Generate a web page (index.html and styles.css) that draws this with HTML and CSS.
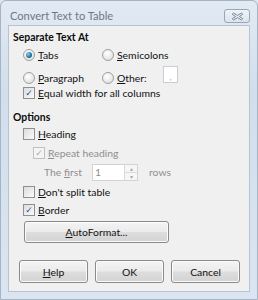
FILE: index.html
```html
<!DOCTYPE html>
<html lang="en">
<head>
    <meta charset="UTF-8">
    <title>Convert Text to Table</title>
    <link rel="stylesheet" href="styles.css">
</head>
<body>
    <div class="window">
        <div class="titlebar">
            <span class="title">Convert Text to Table</span>
            <span class="close-btn">
                <svg width="13" height="9" viewBox="0 0 13 9">
                    <path d="M2.5 1 L6.5 3.4 L10.5 1 L11.8 2.2 L8.4 4.5 L11.8 6.8 L10.5 8 L6.5 5.6 L2.5 8 L1.2 6.8 L4.6 4.5 L1.2 2.2 Z" fill="#e9eef4" stroke="#7d8896" stroke-width="1"/>
                </svg>
            </span>
        </div>
        <div class="client">
            <div class="row group-title r-sep">Separate Text At</div>
            <div class="row r-tabs">
                <label class="opt col1"><span class="radio checked"></span><span><u>T</u>abs</span></label>
                <label class="opt col2"><span class="radio"></span><span><u>S</u>emicolons</span></label>
            </div>
            <div class="row r-para">
                <label class="opt col1"><span class="radio"></span><span><u>P</u>aragraph</span></label>
                <label class="opt col2 other"><span class="radio"></span><span><u>O</u>ther:</span></label>
                <span class="other-input">,</span>
            </div>
            <div class="row r-equal">
                <label class="opt indent"><span class="check checked"></span><span><u>E</u>qual width for all columns</span></label>
            </div>

            <div class="row group-title r-options">Options</div>
            <div class="row r-heading">
                <label class="opt indent"><span class="check"></span><span><u>H</u>eading</span></label>
            </div>
            <div class="row r-repeat">
                <label class="opt indent2 disabled"><span class="check checked"></span><span><u>R</u>epeat heading</span></label>
            </div>
            <div class="row r-first disabled">
                <span class="first-label">The <u>f</u>irst</span>
                <span class="spin">
                    <span class="spin-value">1</span>
                    <span class="spin-arrows">
                        <span class="arrow">&#9652;</span>
                        <span class="arrow">&#9662;</span>
                    </span>
                </span>
                <span class="rows-label">rows</span>
            </div>
            <div class="row r-split">
                <label class="opt indent"><span class="check"></span><span><u>D</u>on't split table</span></label>
            </div>
            <div class="row r-border">
                <label class="opt indent"><span class="check checked"></span><span><u>B</u>order</span></label>
            </div>
            <button class="btn autoformat"><u>A</u>utoFormat...</button>

            <div class="footer">
                <button class="btn"><u>H</u>elp</button>
                <button class="btn">OK</button>
                <button class="btn">Cancel</button>
            </div>
        </div>
    </div>
</body>
</html>
```

FILE: styles.css
```css
body {
    margin: 0;
    padding: 0;
    font-family: Lato, "Noto Sans", sans-serif;
    font-size: 10.4px;
    color: #111;
    background: #dce6f2;
}
.window {
    width: 258px;
    height: 300px;
    box-sizing: border-box;
    border: 1px solid #a7b4c3;
    border-radius: 6px 6px 0 0;
    background: linear-gradient(#e2eaf4, #d2deec 30%, #dbe5f1);
    padding: 0 7px 7px 7px;
}
.titlebar {
    height: 24px;
    display: flex;
    align-items: center;
    justify-content: space-between;
}
.title {
    color: #6e7884;
    font-size: 11.1px;
    margin-left: 2px;
    margin-top: 4px;
}
.close-btn {
    width: 24px;
    height: 12px;
    border: 1px solid #9aa6b3;
    border-radius: 3px;
    background: linear-gradient(#eef3f8, #dbe4ee);
    display: flex;
    align-items: center;
    justify-content: center;
    margin-top: 6px;
}
.close-btn svg {
    display: block;
}
.client {
    height: 267px;
    box-sizing: border-box;
    background: #f0f0f0;
    border: 1px solid #b6c3d1;
    padding-top: 4px;
}
.row {
    height: 14px;
    display: flex;
    align-items: center;
    white-space: nowrap;
}
.group-title {
    font-weight: bold;
    padding-left: 4px;
    color: #0c0c0c;
}
.r-tabs { margin-top: 4px; }
.r-para { margin-top: 9px; }
.r-equal { margin-top: 1px; }
.r-options { margin-top: 10px; }
.r-heading { margin-top: 3px; }
.r-repeat { margin-top: 5px; }
.r-first { margin-top: 5px; }
.r-split { margin-top: 6px; }
.r-border { margin-top: 4px; }

.opt {
    display: flex;
    align-items: center;
    gap: 3px;
}
.col1 {
    width: 93px;
    padding-left: 14px;
    box-sizing: border-box;
}
.other {
    width: 61px;
}
.indent {
    padding-left: 14px;
}
.indent2 {
    padding-left: 24px;
}
.disabled {
    color: #8f8f8f;
}
u {
    text-decoration-thickness: 1px;
    text-underline-offset: 1px;
}

.radio {
    flex-shrink: 0;
    width: 12px;
    height: 12px;
    box-sizing: border-box;
    border: 1px solid #a0a0a0;
    border-radius: 50%;
    background: radial-gradient(circle at 40% 35%, #ffffff, #e4e4e4 70%, #d2d2d2);
    display: flex;
    align-items: center;
    justify-content: center;
}
.radio.checked::after {
    content: "";
    width: 6px;
    height: 6px;
    border-radius: 50%;
    background: radial-gradient(circle at 35% 35%, #8fd3ef, #1f6f9c 60%, #18506f);
}
.check {
    flex-shrink: 0;
    width: 12px;
    height: 12px;
    box-sizing: border-box;
    border: 1px solid #8e8f8f;
    background: linear-gradient(135deg, #dcdcdc, #fbfbfb);
    display: flex;
    align-items: center;
    justify-content: center;
    color: #3a4f8f;
    font-family: "DejaVu Sans", sans-serif;
    font-size: 9px;
    line-height: 1;
}
.check.checked::after {
    content: "\2713";
}
.disabled .check {
    border-color: #c0c0c0;
    background: #f4f4f4;
    color: #a8a8a8;
}

.other-input {
    width: 15px;
    height: 17px;
    box-sizing: border-box;
    border: 1px solid #c9ced6;
    background: #fff;
    color: #b0b0b0;
    font-size: 9px;
    display: flex;
    align-items: flex-end;
    justify-content: center;
    margin-bottom: 7px;
}

.first-label {
    padding-left: 35px;
    width: 83px;
    box-sizing: border-box;
}
.spin {
    width: 46px;
    height: 17px;
    box-sizing: border-box;
    border: 1px solid #d3d3d3;
    background: #fff;
    display: flex;
}
.spin-value {
    flex: 1;
    padding-left: 2px;
    line-height: 15px;
}
.spin-arrows {
    width: 12px;
    display: flex;
    flex-direction: column;
    border-left: 1px solid #dadada;
    background: #f6f6f6;
}
.arrow {
    flex: 1;
    font-size: 6px;
    line-height: 7px;
    text-align: center;
    color: #a8a8a8;
}
.arrow + .arrow {
    border-top: 1px solid #dadada;
}
.rows-label {
    margin-left: 11px;
}

.btn {
    font-family: inherit;
    font-size: 10.4px;
    color: #111;
    height: 22px;
    border: 1px solid #8a8a8a;
    border-radius: 3px;
    background: linear-gradient(#f4f4f4, #ebebeb 48%, #dddddd 52%, #d3d3d3);
    box-shadow: inset 0 0 0 1px #fcfcfc;
    padding: 0;
    cursor: pointer;
}
.autoformat {
    display: block;
    width: 145px;
    margin: 4px 0 0 15px;
}
.footer {
    display: flex;
    gap: 7px;
    margin: 17px 0 0 10px;
}
.footer .btn {
    width: 69px;
    height: 23px;
}
```
